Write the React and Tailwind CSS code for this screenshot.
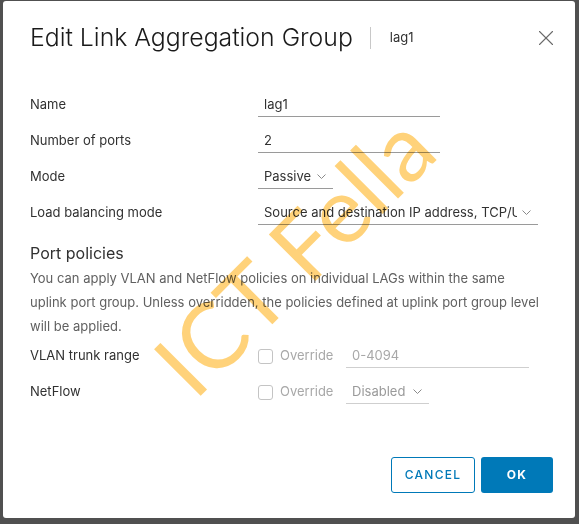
import { X } from "lucide-react";

function Chevron({ className = "" }) {
    return (
        <svg width="9" height="5" viewBox="0 0 9 5" className={className}>
            <polyline points="0.5,0.5 4.5,4.5 8.5,0.5" fill="none" stroke="currentColor" strokeWidth="1" />
        </svg>
    );
}

function FormRow({ label, children }) {
    return (
        <div className="flex items-center h-[36px]">
            <div className="w-[228px] text-[13px] text-[#313131]">{label}</div>
            {children}
        </div>
    );
}

function TextValue({ value, width }) {
    return (
        <div className={`h-[24px] flex items-center px-[6px] border-b border-[#9a9a9a] text-[13px] text-[#313131] ${width}`}>
            {value}
        </div>
    );
}

function SelectValue({ value, width, muted = false }) {
    return (
        <div
            className={`h-[24px] flex items-center justify-between pl-[6px] pr-[7px] border-b text-[13px] ${width} ${
                muted ? "border-[#cfcfcf] text-[#9a9a9a]" : "border-[#9a9a9a] text-[#313131]"
            }`}
        >
            <span className="whitespace-nowrap overflow-hidden">{value}</span>
            <Chevron className="shrink-0 ml-[5px] text-[#8a8a8a]" />
        </div>
    );
}

function Override() {
    return (
        <div className="flex items-center w-[88px]">
            <div className="w-[15px] h-[15px] rounded-[3px] border border-[#c4c4c4] bg-white" />
            <span className="ml-[7px] text-[13px] text-[#a8a8a8]">Override</span>
        </div>
    );
}

export default function App() {
    return (
        <div
            className="w-[579px] h-[524px] bg-[#505050] pt-[1px] pl-[3px]"
            style={{ fontFamily: "Inter, 'Open Sans', sans-serif" }}
        >
            <div className="relative w-[572px] h-[517px] bg-white rounded-[3px] flex flex-col overflow-hidden">
                <div className="h-[74px] flex items-center pl-[27px] pr-[22px]">
                    <h3 className="text-[24.8px] font-light text-[#1a1a1a]">
                        Edit Link Aggregation Group
                    </h3>
                    <div className="ml-[17px] w-px h-[22px] bg-[#c8c8c8]" />
                    <span className="ml-[19px] text-[13px] text-[#313131]">lag1</span>
                    <button className="ml-auto mr-[-6px] text-[#6a6a6a]">
                        <X size={26} strokeWidth={1} />
                    </button>
                </div>

                <div className="flex flex-col pl-[27px] mt-[12px]">
                    <FormRow label="Name">
                        <TextValue value="lag1" width="w-[182px]" />
                    </FormRow>
                    <FormRow label="Number of ports">
                        <TextValue value="2" width="w-[182px]" />
                    </FormRow>
                    <FormRow label="Mode">
                        <SelectValue value="Passive" width="w-[75px]" />
                    </FormRow>
                    <FormRow label="Load balancing mode">
                        <SelectValue value="Source and destination IP address, TCP/UDP port and VLAN" width="w-[280px]" />
                    </FormRow>

                    <h4 className="mt-[10px] h-[25px] leading-[24px] text-[16px] text-[#313131]">Port policies</h4>
                    <p className="w-[514px] text-[13px] leading-[24px] text-[#606060]">
                        You can apply VLAN and NetFlow policies on individual LAGs within the same uplink port group. Unless overridden, the policies defined at uplink port group level will be applied.
                    </p>

                    <FormRow label="VLAN trunk range">
                        <Override />
                        <div className="h-[24px] w-[183px] flex items-center px-[6px] border-b border-[#cfcfcf] text-[13px] text-[#a8a8a8]">
                            0-4094
                        </div>
                    </FormRow>
                    <FormRow label="NetFlow">
                        <Override />
                        <SelectValue value="Disabled" width="w-[83px]" muted />
                    </FormRow>
                </div>

                <div className="mt-auto flex justify-end gap-[6px] pr-[22px] pb-[25px]">
                    <button className="h-[36px] w-[84px] rounded-[3px] border border-[#0079b8] text-[#0079b8] text-[12px] font-medium tracking-[1.3px]">
                        CANCEL
                    </button>
                    <button className="h-[36px] w-[72px] rounded-[3px] bg-[#0079b8] text-white text-[12px] font-bold tracking-[1.3px]">
                        OK
                    </button>
                </div>

                <div
                    className="pointer-events-none absolute left-[290px] top-[253px] -translate-x-1/2 -translate-y-1/2 -rotate-45 whitespace-nowrap text-[92px] leading-none text-[#ffd27a] mix-blend-multiply"
                    style={{ fontFamily: "Lato, sans-serif" }}
                >
                    ICT Fella
                </div>
            </div>
        </div>
    );
}
